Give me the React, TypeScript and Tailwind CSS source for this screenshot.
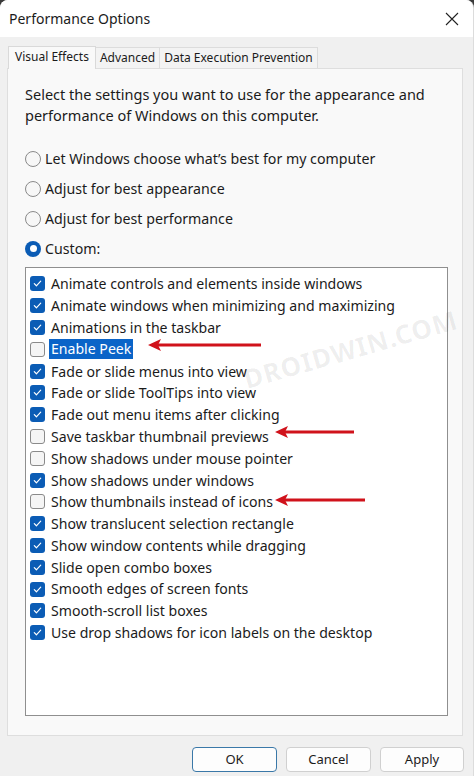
import React from "react";

const items: { label: string; checked: boolean; selected?: boolean }[] = [
  { label: "Animate controls and elements inside windows", checked: true },
  { label: "Animate windows when minimizing and maximizing", checked: true },
  { label: "Animations in the taskbar", checked: true },
  { label: "Enable Peek", checked: false, selected: true },
  { label: "Fade or slide menus into view", checked: true },
  { label: "Fade or slide ToolTips into view", checked: true },
  { label: "Fade out menu items after clicking", checked: true },
  { label: "Save taskbar thumbnail previews", checked: false },
  { label: "Show shadows under mouse pointer", checked: false },
  { label: "Show shadows under windows", checked: true },
  { label: "Show thumbnails instead of icons", checked: false },
  { label: "Show translucent selection rectangle", checked: true },
  { label: "Show window contents while dragging", checked: true },
  { label: "Slide open combo boxes", checked: true },
  { label: "Smooth edges of screen fonts", checked: true },
  { label: "Smooth-scroll list boxes", checked: true },
  { label: "Use drop shadows for icon labels on the desktop", checked: true },
];

const radios = [
  { label: "Let Windows choose what\u2019s best for my computer", on: false },
  { label: "Adjust for best appearance", on: false },
  { label: "Adjust for best performance", on: false },
  { label: "Custom:", on: true },
];

function Check({ on }: { on: boolean }) {
  if (!on) {
    return <span className="w-[15px] h-[15px] rounded-[3px] border border-[#8a8a8a] bg-[#f5f5f5] shrink-0" />;
  }
  return (
    <span className="w-[15px] h-[15px] rounded-[3px] bg-[#0b5cb5] shrink-0 flex items-center justify-center">
      <svg width="11" height="11" viewBox="0 0 12 12" fill="none">
        <path d="M2.5 6.2l2.3 2.3 4.7-5" stroke="#fff" strokeWidth="1.3" strokeLinecap="round" strokeLinejoin="round" />
      </svg>
    </span>
  );
}

function Radio({ on }: { on: boolean }) {
  if (on) {
    return (
      <span className="w-[16px] h-[16px] rounded-full bg-[#0b5cb5] shrink-0 flex items-center justify-center">
        <span className="w-[7px] h-[7px] rounded-full bg-white" />
      </span>
    );
  }
  return <span className="w-[16px] h-[16px] rounded-full border border-[#8a8a8a] bg-[#f7f7f7] shrink-0" />;
}

function Arrow({ x1, x2, y }: { x1: number; x2: number; y: number }) {
  return (
    <svg className="absolute left-0 top-0 pointer-events-none" width="474" height="776">
      <line x1={x1 + 8} y1={y} x2={x2} y2={y} stroke="#d0121b" strokeWidth="3" />
      <path d={`M${x1} ${y} L${x1 + 13} ${y - 6} L${x1 + 10} ${y} L${x1 + 13} ${y + 6} Z`} fill="#d0121b" />
    </svg>
  );
}

export default function App() {
  return (
    <div
      className="relative w-[474px] h-[776px] bg-[#3a3a3a] overflow-hidden text-[#1b1b1b]"
      style={{ fontFamily: '"Noto Sans", "Open Sans", sans-serif' }}
    >
      <div className="w-full h-full rounded-t-[8px] bg-[#f0f0f0] flex flex-col overflow-hidden border-r border-[#dcdcdc]">
        {/* title bar */}
        <div className="h-[37px] bg-white flex items-center justify-between pl-[9px] pr-[14px] shrink-0">
          <span className="text-[14px]">Performance Options</span>
          <svg width="14" height="14" viewBox="0 0 14 14">
            <path d="M1 1L13 13M13 1L1 13" stroke="#222" strokeWidth="1.1" />
          </svg>
        </div>

        {/* tabs */}
        <div className="flex items-end pl-[8px] pt-[9px] text-[12px] shrink-0">
          <div className="h-[23px] px-[6px] bg-[#f9f9f9] border border-b-0 border-[#d9d9d9] flex items-start pt-[1px] relative z-10 -mb-px">
            Visual Effects
          </div>
          <div className="h-[21px] px-[4px] bg-[#f3f3f3] border-t border-r border-[#dcdcdc] flex items-center">
            Advanced
          </div>
          <div className="h-[21px] px-[4px] bg-[#f3f3f3] border-t border-r border-[#dcdcdc] flex items-center">
            Data Execution Prevention
          </div>
        </div>

        {/* panel */}
        <div className="mx-[7px] mr-[10px] h-[668px] bg-[#f9f9f9] border border-[#dedede] pl-[17px] pr-[14px] pt-[15px] flex flex-col shrink-0">
          <p className="text-[14.5px] leading-[21px]">
            Select the settings you want to use for the appearance and performance of Windows on this computer.
          </p>
          <div className="mt-[23px] flex flex-col gap-[11px]">
            {radios.map((r) => (
              <div key={r.label} className="flex items-center gap-[4px] h-[19px] text-[14.2px]">
                <Radio on={r.on} />
                <span>{r.label}</span>
              </div>
            ))}
          </div>
          <div className="mt-[9px] h-[449px] bg-white border border-[#8f8f8f] pt-[5px] pl-[4px] flex flex-col">
            {items.map((it) => (
              <div key={it.label} className="h-[21.8px] flex items-center gap-[6px] text-[14.1px]">
                <Check on={it.checked} />
                {it.selected ? (
                  <span className="bg-[#0a64c8] text-white px-[2px] -ml-[2px] leading-[20px]">{it.label}</span>
                ) : (
                  <span>{it.label}</span>
                )}
              </div>
            ))}
          </div>
        </div>

        {/* buttons */}
        <div className="flex justify-end gap-[9px] pr-[9px] pt-[11px] text-[13px]">
          <button className="w-[85px] h-[25px] bg-[#fdfdfd] border-[1.5px] border-[#3a78a8] rounded-[4px]">OK</button>
          <button className="w-[85px] h-[25px] bg-[#fdfdfd] border border-[#d0d0d0] rounded-[4px]">Cancel</button>
          <button className="w-[84px] h-[25px] bg-[#fdfdfd] border border-[#d0d0d0] rounded-[4px]">Apply</button>
        </div>
      </div>

      {/* watermark */}
      <div className="absolute left-[240px] top-[330px] -rotate-[16deg] text-[26px] font-bold tracking-[1px] text-black/[0.07] pointer-events-none">
        DROIDWIN.COM
      </div>

      <Arrow x1={148} x2={261} y={345} />
      <Arrow x1={275} x2={354} y={432} />
      <Arrow x1={275} x2={365} y={500} />
    </div>
  );
}
